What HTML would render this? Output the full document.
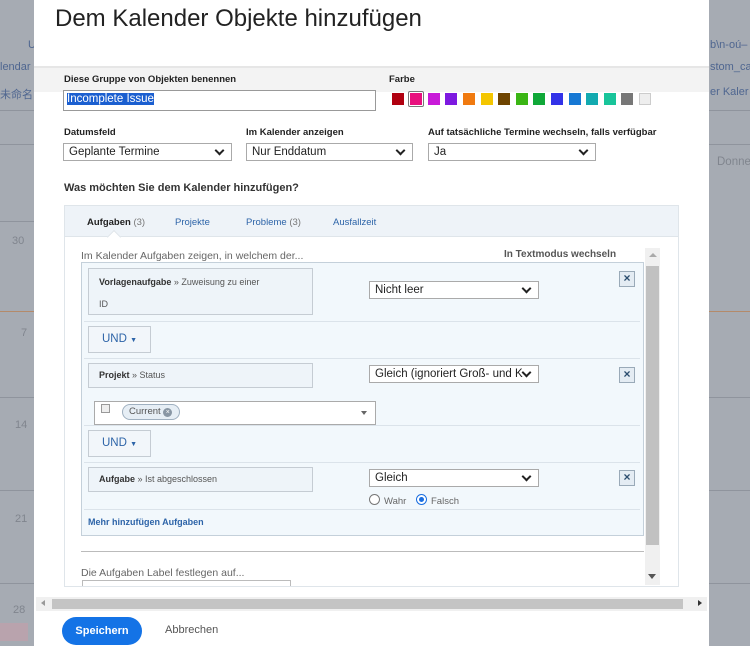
<!DOCTYPE html>
<html><head><meta charset="utf-8"><style>
*{box-sizing:border-box;margin:0;padding:0}
body{width:750px;height:646px;overflow:hidden;font-family:"Liberation Sans","Noto Sans CJK SC",sans-serif;position:relative;font-size:11px;color:#333}
.a{position:absolute}
.bgt{color:#4f6690;font-size:11px}
.hl{position:absolute;height:1px;background:#8f949d}
.num{position:absolute;color:#80858e;font-size:11px}
.modal{position:absolute;left:34px;top:0;width:675px;height:646px;background:#fff}
.lbl{position:absolute;font-size:9.5px;font-weight:bold;color:#222}
.sel{position:absolute;height:18px;border:1px solid #aaa;background:#fff;font-size:11.5px;color:#222;padding:1px 5px;line-height:15px;white-space:nowrap;overflow:hidden}
.sel:after{content:"";position:absolute;right:8px;top:3px;width:5px;height:5px;border-right:2px solid #222;border-bottom:2px solid #222;transform:rotate(45deg)}
.sw{position:absolute;top:93px;width:12px;height:12px}
.fld{position:absolute;left:88px;width:225px;border:1px solid #c5ccd3;background:#eef4f9;font-size:9px;color:#555;padding:6px 10px;line-height:22px}
.fld b{color:#333}
.x{position:absolute;left:619px;width:16px;height:16px;border:1px solid #9aaab8;background:#e4ecf3;font-size:12px;font-weight:bold;color:#2b4d6e;text-align:center;line-height:13px}
.und{position:absolute;left:88px;width:63px;height:27px;border:1px solid #c5ccd3;background:#f2f6fa;color:#2d64a8;font-size:11.5px;padding:6px 13px;white-space:nowrap}
.sep{position:absolute;left:84px;width:556px;height:1px;background:#dbe3ea}
</style></head><body>
<div class="a" style="left:0;top:0;width:750px;height:646px;background:#a6abb3"></div>
<div class="bgt a" style="left:28px;top:39px">U</div>
<div class="bgt a" style="left:0;top:61px">lendar</div>
<div class="bgt a" style="left:0;top:86px">未命名</div>
<div class="hl" style="left:0;top:110px;width:34px"></div>
<div class="hl" style="left:0;top:144px;width:34px"></div>
<div class="hl" style="left:0;top:221px;width:34px"></div>
<div class="a" style="left:0;top:311px;width:34px;height:1px;background:#b48a6a"></div>
<div class="hl" style="left:0;top:397px;width:34px"></div>
<div class="hl" style="left:0;top:490px;width:34px"></div>
<div class="hl" style="left:0;top:583px;width:34px"></div>
<div class="num" style="left:12px;top:235px">30</div>
<div class="num" style="left:21px;top:327px">7</div>
<div class="num" style="left:15px;top:419px">14</div>
<div class="num" style="left:15px;top:513px">21</div>
<div class="num" style="left:13px;top:604px">28</div>
<div class="a" style="left:0;top:623px;width:28px;height:18px;background:#b9a3ad"></div>
<div class="bgt a" style="left:710px;top:39px">b\n-oú–</div>
<div class="bgt a" style="left:710px;top:61px">stom_ca</div>
<div class="bgt a" style="left:710px;top:86px">er Kaler</div>
<div class="hl" style="left:709px;top:110px;width:41px"></div>
<div class="hl" style="left:709px;top:144px;width:41px"></div>
<div class="num" style="left:717px;top:156px;font-size:11.5px">Donne</div>
<div class="a" style="left:709px;top:311px;width:41px;height:1px;background:#b48a6a"></div>
<div class="hl" style="left:709px;top:397px;width:41px"></div>
<div class="hl" style="left:709px;top:490px;width:41px"></div>
<div class="hl" style="left:709px;top:583px;width:41px"></div>

<div class="modal">
<div class="a" style="left:21px;top:5px;font-size:24px;color:#222">Dem Kalender Objekte hinzufügen</div>
<div class="a" style="left:0;top:66px;width:675px;height:26px;background:#f3f3f3;border-top:2px solid #e6e6e6"></div>
</div>
<div class="lbl" style="left:64px;top:74px">Diese Gruppe von Objekten benennen</div>
<div class="a" style="left:63px;top:90px;width:313px;height:21px;border:1px solid #999;background:#fff;padding:2px 3px"><span style="background:#1b5fd0;color:#fff;font-size:11.5px">Incomplete Issue</span></div>
<div class="lbl" style="left:389px;top:74px">Farbe</div>
<div class="sw" style="left:392px;background:#b00010"></div>
<div class="a" style="left:408px;top:91px;width:16px;height:16px;border:1px solid #777;border-radius:2px"></div>
<div class="sw" style="left:410px;background:#e8107e"></div>
<div class="sw" style="left:428px;background:#c81ad8"></div>
<div class="sw" style="left:445px;background:#7d19e0"></div>
<div class="sw" style="left:463px;background:#f07a10"></div>
<div class="sw" style="left:481px;background:#f4c600"></div>
<div class="sw" style="left:498px;background:#6e4400"></div>
<div class="sw" style="left:516px;background:#3ab514"></div>
<div class="sw" style="left:533px;background:#10a838"></div>
<div class="sw" style="left:551px;background:#3232e8"></div>
<div class="sw" style="left:569px;background:#1678d4"></div>
<div class="sw" style="left:586px;background:#12aab0"></div>
<div class="sw" style="left:604px;background:#18c49a"></div>
<div class="sw" style="left:621px;background:#777"></div>
<div class="sw" style="left:639px;background:#eee;border:1px solid #ccc"></div>

<div class="lbl" style="left:64px;top:127px">Datumsfeld</div>
<div class="lbl" style="left:246px;top:127px">Im Kalender anzeigen</div>
<div class="lbl" style="left:428px;top:127px">Auf tatsächliche Termine wechseln, falls verfügbar</div>
<div class="sel" style="left:63px;top:143px;width:169px">Geplante Termine</div>
<div class="sel" style="left:246px;top:143px;width:167px">Nur Enddatum</div>
<div class="sel" style="left:428px;top:143px;width:168px">Ja</div>
<div class="a" style="left:64px;top:182px;font-size:11px;font-weight:bold;color:#333">Was möchten Sie dem Kalender hinzufügen?</div>

<div class="a" style="left:64px;top:205px;width:615px;height:382px;border:1px solid #dfe5ea;background:#fff"></div>
<div class="a" style="left:65px;top:206px;width:613px;height:31px;background:#eef3f8;border-bottom:1px solid #dfe5ea"></div>
<div class="a" style="left:87px;top:217px;font-size:9.5px;color:#222"><b>Aufgaben</b> <span style="color:#777">(3)</span></div>
<div class="a" style="left:175px;top:217px;font-size:9.5px;color:#2d64a8">Projekte</div>
<div class="a" style="left:246px;top:217px;font-size:9.5px;color:#2d64a8">Probleme <span style="color:#777">(3)</span></div>
<div class="a" style="left:333px;top:217px;font-size:9.5px;color:#2d64a8">Ausfallzeit</div>
<div class="a" style="left:109px;top:232px;width:10px;height:10px;background:#fff;border-left:1px solid #dfe5ea;border-top:1px solid #dfe5ea;transform:rotate(45deg)"></div>

<div class="a" style="left:81px;top:250px;font-size:10.5px;color:#666">Im Kalender Aufgaben zeigen, in welchem der...</div>
<div class="a" style="left:504px;top:249px;font-size:10px;font-weight:bold;color:#555">In Textmodus wechseln</div>
<div class="a" style="left:645px;top:248px;width:15px;height:337px;background:#f0f0f0"></div>
<div class="a" style="left:646px;top:266px;width:13px;height:279px;background:#c1c1c1"></div>
<div class="a" style="left:649px;top:253px;width:0;height:0;border:4px solid transparent;border-bottom:4px solid #aaa;border-top:0"></div>
<div class="a" style="left:648px;top:574px;width:0;height:0;border:4px solid transparent;border-top:5px solid #555;border-bottom:0"></div>

<div class="a" style="left:81px;top:262px;width:563px;height:274px;border:1px solid #c4d0da;background:#f2f8fc"></div>
<div class="fld" style="top:268px;height:47px;padding:2px 10px"><b>Vorlagenaufgabe</b> » Zuweisung zu einer<br>ID</div>
<div class="sel" style="left:369px;top:281px;width:170px">Nicht leer</div>
<div class="x" style="top:271px">×</div>
<div class="sep" style="top:321px"></div>
<div class="und" style="top:326px">UND <span style="font-size:7px">▼</span></div>
<div class="sep" style="top:358px"></div>
<div class="fld" style="top:363px;height:25px;padding:0 10px"><b>Projekt</b> » Status</div>
<div class="sel" style="left:369px;top:365px;width:170px">Gleich (ignoriert Groß- und K</div>
<div class="x" style="top:367px">×</div>
<div class="a" style="left:94px;top:401px;width:282px;height:24px;border:1px solid #aaa;background:#fff"></div>
<div class="a" style="left:101px;top:404px;width:9px;height:9px;border:1px solid #999;background:#eee"></div>
<div class="a" style="left:122px;top:404px;width:58px;height:16px;border:1px solid #9fb0c0;border-radius:8px;background:#e6eef5;font-size:9.5px;color:#555;padding:1px 6px;white-space:nowrap">Current <span style="display:inline-block;width:9px;height:9px;border-radius:5px;background:#8896a4;color:#fff;font-size:7px;line-height:9px;text-align:center">×</span></div>
<div class="a" style="left:361px;top:411px;border:3px solid transparent;border-top:4px solid #666"></div>
<div class="sep" style="top:425px"></div>
<div class="und" style="top:430px">UND <span style="font-size:7px">▼</span></div>
<div class="sep" style="top:462px"></div>
<div class="fld" style="top:467px;height:25px;padding:0 10px"><b>Aufgabe</b> » Ist abgeschlossen</div>
<div class="sel" style="left:369px;top:469px;width:170px">Gleich</div>
<div class="x" style="top:470px">×</div>
<div class="a" style="left:369px;top:494px;width:11px;height:11px;border:1px solid #777;border-radius:6px;background:#fff"></div>
<div class="a" style="left:384px;top:496px;font-size:9.5px;color:#666">Wahr</div>
<div class="a" style="left:416px;top:494px;width:11px;height:11px;border:1px solid #1a6ee0;border-radius:6px;background:#fff"><div style="margin:2px;width:5px;height:5px;border-radius:3px;background:#1a6ee0"></div></div>
<div class="a" style="left:431px;top:496px;font-size:9.5px;color:#666">Falsch</div>
<div class="sep" style="top:509px"></div>
<div class="a" style="left:88px;top:517px;font-size:9px;font-weight:bold;color:#2d64a8">Mehr hinzufügen Aufgaben</div>

<div class="a" style="left:81px;top:551px;width:563px;height:1px;background:#bbb"></div>
<div class="a" style="left:81px;top:567px;font-size:10.5px;color:#666">Die Aufgaben Label festlegen auf...</div>
<div class="a" style="left:82px;top:580px;width:209px;height:6px;border:1px solid #bbb;border-bottom:0"></div>

<div class="a" style="left:36px;top:597px;width:671px;height:14px;background:#f0f0f0"></div>
<div class="a" style="left:52px;top:599px;width:631px;height:10px;background:#c4c4c4"></div>
<div class="a" style="left:41px;top:600px;border:3px solid transparent;border-right:4px solid #999;border-left:0"></div>
<div class="a" style="left:698px;top:600px;border:3px solid transparent;border-left:4px solid #333;border-right:0"></div>

<div class="a" style="left:62px;top:617px;width:80px;height:28px;border-radius:14px;background:#1473e6;color:#fff;font-size:11px;font-weight:bold;text-align:center;line-height:28px">Speichern</div>
<div class="a" style="left:165px;top:624px;font-size:11px;color:#555">Abbrechen</div>
</body></html>
